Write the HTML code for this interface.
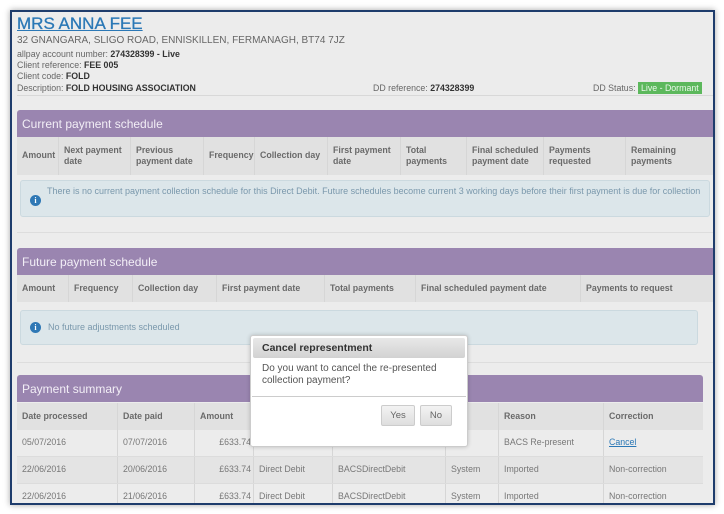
<!DOCTYPE html>
<html><head><style>
*{margin:0;padding:0;box-sizing:border-box}
body{width:724px;height:514px;background:#fff;font-family:"Liberation Sans",sans-serif;position:relative;overflow:hidden;color:#555}
.frame{position:absolute;left:10px;top:10px;width:705px;height:495px;border:2px solid #1e3c6c;background:#ececec;overflow:hidden;box-shadow:0 0 6px rgba(0,0,0,.35)}
.a{position:absolute;white-space:nowrap}
.small{font-size:8.8px;color:#666}
.small b{color:#333}
.ph{position:absolute;left:5px;width:700px;height:27px;background:#9a85b0;border-radius:3px 3px 0 0;color:#f2eef6;font-size:12px;padding:7px 0 0 5px}
.hr{position:absolute;left:5px;width:700px;background:#e1e1e1;font-size:8.8px;font-weight:bold;color:#6a6a6a}
.hr div,.row div{position:absolute;top:0;height:100%;border-left:1px solid #d6d6d6;padding-left:5px;display:flex;align-items:center;line-height:1.3}
.info{position:absolute;left:8px;width:690px;background:#dce6ea;border:1px solid #cbd9df;border-radius:3px;font-size:9px;color:#7a98ac;overflow:hidden}
.ic{display:inline-block;width:11px;height:11px;border-radius:50%;background:#2f78b5;color:#fff;font-size:8px;font-weight:bold;text-align:center;line-height:11px;font-family:"Liberation Serif",serif}
.row{position:absolute;left:5px;width:700px;height:27px;font-size:8.8px;color:#777;border-bottom:1px solid #dcdcdc}
.btn{position:absolute;top:405px;height:21px;background:linear-gradient(#f3f3f3,#dedede);border:1px solid #ccc;border-radius:2px;font-size:9.5px;color:#666;text-align:center;line-height:19px}
</style></head><body>
<div class="frame">
<div class="a" style="left:5px;top:2px;font-size:17px;color:#2b78b6;text-decoration:underline;-webkit-text-stroke:0.3px #2b78b6">MRS ANNA FEE</div>
<div class="a" style="left:5px;top:23px;font-size:10px;color:#666">32 GNANGARA, SLIGO ROAD, ENNISKILLEN, FERMANAGH, BT74 7JZ</div>
<div class="a small" style="left:5px;top:37px">allpay account number: <b>274328399 - Live</b></div>
<div class="a small" style="left:5px;top:48px">Client reference: <b>FEE 005</b></div>
<div class="a small" style="left:5px;top:59px">Client code: <b>FOLD</b></div>
<div class="a small" style="left:5px;top:71px">Description: <b>FOLD HOUSING ASSOCIATION</b></div>
<div class="a small" style="left:361px;top:71px">DD reference: <b>274328399</b></div>
<div class="a small" style="left:581px;top:71px">DD Status: <span style="background:#5cb85c;color:#eaf7ea;padding:1px 3px">Live - Dormant</span></div>
<div class="a" style="left:5px;top:83px;width:700px;height:1px;background:#d8d8d8"></div>

<div class="ph" style="top:98px">Current payment schedule</div>
<div class="hr" style="top:125px;height:38px">
<div style="left:0;border:0">Amount</div><div style="left:41px">Next payment<br>date</div><div style="left:113px">Previous<br>payment date</div><div style="left:186px">Frequency</div><div style="left:237px">Collection day</div><div style="left:310px">First payment<br>date</div><div style="left:383px">Total<br>payments</div><div style="left:449px">Final scheduled<br>payment date</div><div style="left:526px">Payments<br>requested</div><div style="left:608px">Remaining<br>payments</div></div>
<div class="info" style="top:168px;height:37px"><span class="ic" style="position:absolute;left:9px;top:14px">i</span><span class="a" style="left:26px;top:5px">There is no current payment collection schedule for this Direct Debit. Future schedules become current 3 working days before their first payment is due for collection</span></div>
<div class="a" style="left:5px;top:220px;width:700px;height:1px;background:#ddd"></div>

<div class="ph" style="top:236px">Future payment schedule</div>
<div class="hr" style="top:263px;height:27px">
<div style="left:0;border:0">Amount</div><div style="left:51px">Frequency</div><div style="left:115px">Collection day</div><div style="left:199px">First payment date</div><div style="left:307px">Total payments</div><div style="left:398px">Final scheduled payment date</div><div style="left:563px">Payments to request</div></div>
<div class="info" style="top:298px;height:35px;width:678px"><span class="ic" style="position:absolute;left:9px;top:11px">i</span><span class="a" style="left:27px;top:11px">No future adjustments scheduled</span></div>
<div class="a" style="left:5px;top:350px;width:700px;height:1px;background:#ddd"></div>

<div class="ph" style="top:363px;width:686px">Payment summary</div>
<div class="hr" style="top:391px;height:27px;width:686px">
<div style="left:0;border:0">Date processed</div><div style="left:100px">Date paid</div><div style="left:177px">Amount</div><div style="left:236px"></div><div style="left:315px"></div><div style="left:428px"></div><div style="left:481px">Reason</div><div style="left:586px">Correction</div></div>
<div class="row" style="top:418px;width:686px;background:#ececec">
<div style="left:0;border:0">05/07/2016</div><div style="left:100px">07/07/2016</div><div style="left:177px;width:59px;justify-content:flex-end;padding-right:2px">£633.74</div><div style="left:236px"></div><div style="left:315px"></div><div style="left:428px"></div><div style="left:481px">BACS Re-present</div><div style="left:586px;color:#2b78b6;text-decoration:underline">Cancel</div></div>
<div class="row" style="top:445px;width:686px;background:#e4e4e4">
<div style="left:0;border:0">22/06/2016</div><div style="left:100px">20/06/2016</div><div style="left:177px;width:59px;justify-content:flex-end;padding-right:2px">£633.74</div><div style="left:236px">Direct Debit</div><div style="left:315px">BACSDirectDebit</div><div style="left:428px">System</div><div style="left:481px">Imported</div><div style="left:586px">Non-correction</div></div>
<div class="row" style="top:472px;width:686px;background:#ececec">
<div style="left:0;border:0">22/06/2016</div><div style="left:100px">21/06/2016</div><div style="left:177px;width:59px;justify-content:flex-end;padding-right:2px">£633.74</div><div style="left:236px">Direct Debit</div><div style="left:315px">BACSDirectDebit</div><div style="left:428px">System</div><div style="left:481px">Imported</div><div style="left:586px">Non-correction</div></div>
</div>

<div class="a" style="left:250px;top:335px;width:218px;height:112px;background:#fff;border:1px solid #ccc;border-radius:3px;box-shadow:0 0 4px rgba(0,0,0,.2)"></div>
<div class="a" style="left:253px;top:338px;width:212px;height:20px;background:linear-gradient(#e8e8e8,#d2d2d2);border-radius:2px;font-size:10.5px;font-weight:bold;color:#333;padding:4px 0 0 9px">Cancel representment</div>
<div class="a" style="left:262px;top:363px;font-size:10px;color:#555;line-height:12px">Do you want to cancel the re-presented<br>collection payment?</div>
<div class="a" style="left:252px;top:396px;width:214px;height:1px;background:#ccc"></div>
<div class="btn" style="left:381px;width:34px">Yes</div>
<div class="btn" style="left:420px;width:32px">No</div>
</body></html>
